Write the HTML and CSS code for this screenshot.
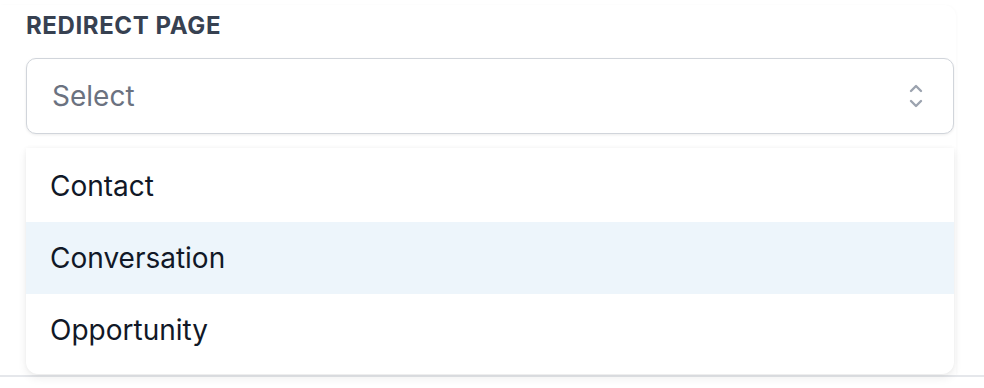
FILE: index.html
```html
<!DOCTYPE html>
<html>
<head>
<meta charset="utf-8">
<link rel="stylesheet" href="styles.css">
</head>
<body>
<div class="page">
  <div class="card">
    <div class="field">
      <div class="label">REDIRECT PAGE</div>
      <div class="select">
        <span class="placeholder">Select</span>
        <svg class="chevrons" width="18" height="30" viewBox="0 0 18 30" fill="none" stroke="#9ca3af" stroke-width="2.4" stroke-linecap="round" stroke-linejoin="round">
          <path d="M4 10 L9 5 L14 10"/>
          <path d="M4 20 L9 25 L14 20"/>
        </svg>
      </div>
      <div class="menu">
        <div class="option">Contact</div>
        <div class="option active">Conversation</div>
        <div class="option">Opportunity</div>
      </div>
    </div>
  </div>
  <div class="rule"></div>
</div>
</body>
</html>
```

FILE: styles.css
```css
html, body {
  margin: 0;
  padding: 0;
  background: #ffffff;
}

.page {
  width: 984px;
  height: 388px;
  overflow: hidden;
  font-family: Inter, "Noto Sans", "Liberation Sans", sans-serif;
}

.card {
  margin: 5px 28px 0 0;
  padding: 0 2px 0 26px;
  border-top-right-radius: 12px;
  box-shadow: 1px 0 3px rgba(0, 0, 0, 0.025);
  height: 370px;
}

.field {
  display: flex;
  flex-direction: column;
}

.label {
  margin-top: 7px;
  font-size: 24px;
  line-height: 28px;
  font-weight: 700;
  color: #374151;
  letter-spacing: 0.6px;
}

.select {
  margin-top: 18px;
  height: 74px;
  border: 1.5px solid #d1d5db;
  border-radius: 10px;
  box-shadow: 0 1px 3px rgba(0, 0, 0, 0.08);
  display: flex;
  align-items: center;
  justify-content: space-between;
  padding: 0 28px 0 25px;
  background: #ffffff;
}

.placeholder {
  font-size: 28px;
  color: #6b7280;
}

.chevrons {
  display: block;
}

.menu {
  margin-top: 14px;
  padding: 2px 0 8px;
  border-radius: 0 0 12px 12px;
  background: #ffffff;
  box-shadow: 0 4px 10px rgba(0, 0, 0, 0.07), 0 0 4px rgba(0, 0, 0, 0.04);
}

.option {
  height: 72px;
  display: flex;
  align-items: center;
  padding-left: 24px;
  font-size: 28px;
  color: #111827;
}

.option.active {
  background: #edf5fb;
}

.rule {
  height: 2px;
  background: #e5e7eb;
}
```
